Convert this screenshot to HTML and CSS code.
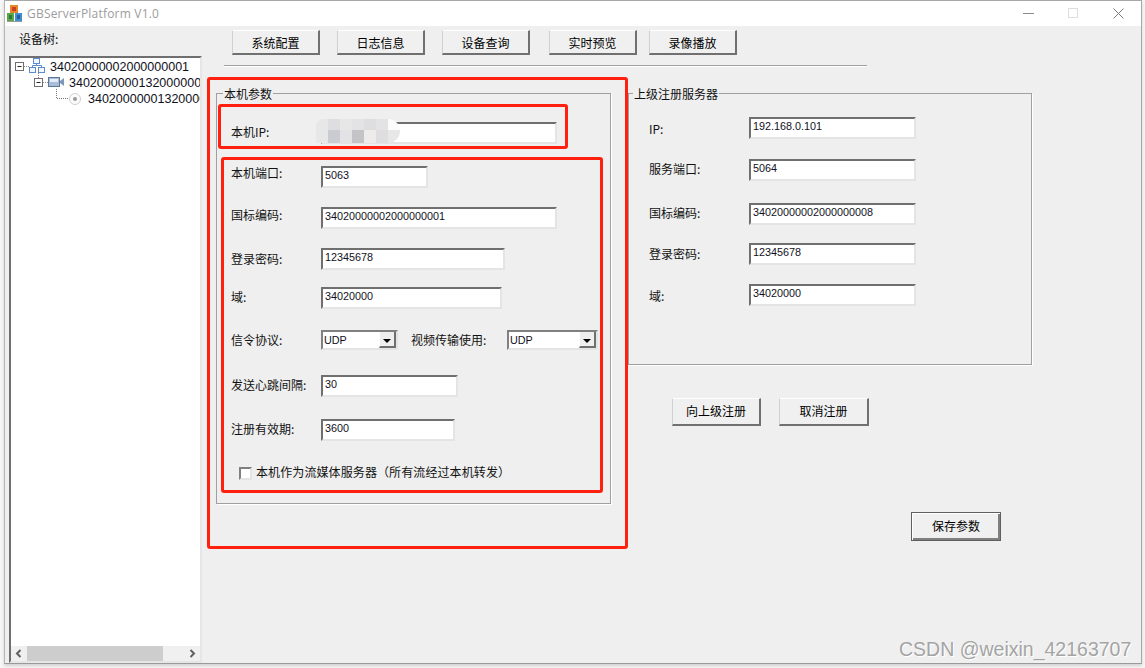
FILE: index.html
```html
<!DOCTYPE html>
<html lang="zh-CN">
<head>
<meta charset="utf-8">
<title>GBServerPlatform V1.0</title>
<link rel="stylesheet" href="styles.css">
</head>
<body>
<div class="window">
  <header class="titlebar">
    <svg class="app-icon" width="15" height="17" viewBox="0 0 15 17">
      <rect x="3" y="0" width="8" height="8" fill="#e8862a"/>
      <rect x="5" y="2" width="4" height="4" fill="#c8402a"/>
      <rect x="0" y="8" width="7" height="8" fill="#5aa648"/>
      <rect x="2" y="10" width="3" height="4" fill="#2f7a34"/>
      <rect x="8" y="8" width="7" height="8" fill="#3f8fd0"/>
      <rect x="10" y="10" width="3" height="4" fill="#1f5fa8"/>
      <rect x="0" y="16" width="15" height="1" fill="#999"/>
    </svg>
    <span class="app-title">GBServerPlatform V1.0</span>
    <div class="win-controls">
      <svg width="11" height="11" viewBox="0 0 11 11"><path d="M0 5.5H11" stroke="#8a8a8a" fill="none"/></svg>
      <svg width="11" height="11" viewBox="0 0 11 11"><rect x=".5" y=".5" width="9" height="9" stroke="#dedede" fill="none"/></svg>
      <svg width="11" height="11" viewBox="0 0 11 11"><path d="M.5 .5L10.5 10.5M10.5 .5L.5 10.5" stroke="#7a7a7a" fill="none"/></svg>
    </div>
  </header>

  <div class="content">
    <aside class="sidebar">
      <div class="sidebar-label">设备树:</div>
      <div class="tree-box">
        <div class="tree">
          <div class="tree-row level-1">
            <svg class="tree-glyph" width="30" height="16" viewBox="0 0 30 16">
              <rect x=".5" y="3.5" width="8" height="8" fill="#fff" stroke="#6f6f6f"/>
              <path d="M2.5 7.5H6.5" stroke="#222"/>
              <path d="M9 7.5H14" stroke="#888" stroke-dasharray="1 1"/>
              <g fill="#f2f6fd" stroke="#5b8bd0">
                <rect x="18.5" y="-.5" width="6" height="5"/>
                <rect x="14.5" y="8.5" width="6" height="5"/>
                <rect x="23.5" y="8.5" width="6" height="5"/>
              </g>
              <path d="M21.5 4.5V6.5M17.5 8.5V6.5H26.5V8.5" fill="none" stroke="#5b8bd0"/>
            </svg>
            <span class="tree-text">34020000002000000001</span>
          </div>
          <div class="tree-row level-2">
            <svg class="tree-glyph" width="30" height="16" viewBox="0 0 30 16">
              <path d="M4.5 -6V3" stroke="#888" stroke-dasharray="1 1"/>
              <rect x=".5" y="3.5" width="8" height="8" fill="#fff" stroke="#6f6f6f"/>
              <path d="M2.5 7.5H6.5" stroke="#222"/>
              <path d="M9 7.5H14" stroke="#888" stroke-dasharray="1 1"/>
              <rect x="14.5" y="2.5" width="11" height="9" fill="#a9bdd8" stroke="#5d7696"/>
              <rect x="16" y="4" width="8" height="3" fill="#e4ecf6"/>
              <path d="M26 6L30 3V11L26 8Z" fill="#7f97b8"/>
            </svg>
            <span class="tree-text">34020000001320000000</span>
          </div>
          <div class="tree-row level-3">
            <svg class="tree-glyph" width="30" height="16" viewBox="0 0 30 16">
              <path d="M3.5 -2V7.5H15" fill="none" stroke="#777" stroke-dasharray="1 1"/>
              <circle cx="22" cy="8" r="5.5" fill="#fbfbfb" stroke="#cfcfcf"/>
              <circle cx="22" cy="8" r="2" fill="#9a9a9a"/>
            </svg>
            <span class="tree-text">34020000001320000001</span>
          </div>
        </div>
        <div class="hscroll">
          <svg class="scroll-arrow" width="16" height="15" viewBox="0 0 16 15"><path d="M9.5 4L6 7.5L9.5 11" fill="none" stroke="#606060" stroke-width="2"/></svg>
          <div class="scroll-thumb"></div>
          <svg class="scroll-arrow end" width="16" height="15" viewBox="0 0 16 15"><path d="M6.5 4L10 7.5L6.5 11" fill="none" stroke="#606060" stroke-width="2"/></svg>
        </div>
      </div>
    </aside>

    <main class="main">
      <nav class="toolbar">
        <button class="btn">系统配置</button>
        <button class="btn">日志信息</button>
        <button class="btn">设备查询</button>
        <button class="btn">实时预览</button>
        <button class="btn">录像播放</button>
      </nav>
      <div class="separator"></div>

      <div class="panels">
        <section class="group group-local">
          <span class="legend">本机参数</span>
          <div class="row">
            <label class="label label-local lift-4">本机IP:</label>
            <input class="field w-236" value="">
            <div class="mosaic">
              <i class="c1"></i><i class="c2"></i><i class="c1"></i><i class="c3"></i><i class="c2"></i><i class="c3"></i><i class="c0"></i>
              <i class="c1"></i><i class="c4"></i><i class="c3"></i><i class="c5"></i><i class="c6"></i><i class="c2"></i><i class="c1"></i>
            </div>
          </div>
          <div class="row">
            <label class="label label-local lift-8">本机端口:</label>
            <input class="field w-107" value="5063">
          </div>
          <div class="row">
            <label class="label label-local lift-6">国标编码:</label>
            <input class="field w-236" value="34020000002000000001">
          </div>
          <div class="row">
            <label class="label label-local lift-2">登录密码:</label>
            <input class="field w-184" value="12345678">
          </div>
          <div class="row">
            <label class="label label-local lift-4">域:</label>
            <input class="field w-181" value="34020000">
          </div>
          <div class="row">
            <label class="label label-local lift-2">信令协议:</label>
            <div class="combo w-77"><span class="combo-text">UDP</span><span class="combo-btn"></span></div>
            <label class="label label-video lift-2">视频传输使用:</label>
            <div class="combo w-91"><span class="combo-text">UDP</span><span class="combo-btn"></span></div>
          </div>
          <div class="row">
            <label class="label label-local lift-4">发送心跳间隔:</label>
            <input class="field w-137" value="30">
          </div>
          <div class="row">
            <label class="label label-local lift-4">注册有效期:</label>
            <input class="field w-134" value="3600">
          </div>
          <div class="check-row">
            <span class="checkbox"></span>
            <span class="check-text">本机作为流媒体服务器（所有流经过本机转发）</span>
          </div>
        </section>

        <div class="right-col">
          <section class="group group-upper">
            <span class="legend">上级注册服务器</span>
            <div class="row">
              <label class="label label-upper">IP:</label>
              <input class="field w-167" value="192.168.0.101">
            </div>
            <div class="row">
              <label class="label label-upper lift-4">服务端口:</label>
              <input class="field w-167" value="5064">
            </div>
            <div class="row">
              <label class="label label-upper lift-4">国标编码:</label>
              <input class="field w-167" value="34020000002000000008">
            </div>
            <div class="row">
              <label class="label label-upper lift-2">登录密码:</label>
              <input class="field w-167" value="12345678">
            </div>
            <div class="row">
              <label class="label label-upper">域:</label>
              <input class="field w-167" value="34020000">
            </div>
          </section>
          <div class="register-actions">
            <button class="btn btn-tall">向上级注册</button>
            <button class="btn btn-tall btn-wide">取消注册</button>
          </div>
          <div class="save-row">
            <button class="btn btn-default">保存参数</button>
          </div>
        </div>
      </div>

      <div class="mark mark-outer"></div>
      <div class="mark mark-ip"></div>
      <div class="mark mark-fields"></div>
    </main>
  </div>
  <div class="watermark">CSDN @weixin_42163707</div>
</div>
</body>
</html>
```

FILE: styles.css
```css
* { box-sizing: border-box; }

html, body {
  margin: 0;
  height: 100%;
  overflow: hidden;
  background: #f6f6f6;
}

body {
  font-family: "Liberation Sans", "Noto Sans CJK SC", sans-serif;
  font-size: 12px;
  color: #111;
}

.window {
  position: relative;
  width: 1138px;
  height: 664px;
  margin-left: 4px;
  display: flex;
  flex-direction: column;
  background: #efefef;
  border-top: 1px solid #a8a8a8;
  border-left: 1px solid #b5b5b5;
  border-right: 1px solid #a8a8a8;
  border-bottom: 1px solid #9a9a9a;
  box-shadow: 0 2px 3px rgba(0, 0, 0, .15);
}

.titlebar {
  flex: none;
  height: 25px;
  display: flex;
  align-items: center;
  padding-left: 2px;
  background: #fff;
}

.app-icon { flex: none; }

.app-title {
  margin-left: 5px;
  padding-bottom: 1px;
  font-family: "Open Sans", sans-serif;
  font-size: 12px;
  letter-spacing: .2px;
  color: #9c9c9c;
}

.win-controls {
  margin-left: auto;
  margin-right: 17px;
  display: flex;
  gap: 34px;
}

.content {
  flex: 1;
  min-height: 0;
  display: flex;
}

.sidebar {
  flex: none;
  width: 197px;
  padding-left: 4px;
  display: flex;
  flex-direction: column;
}

.sidebar-label {
  flex: none;
  height: 30px;
  padding: 4px 0 0 10px;
  font-family: "Noto Sans CJK SC", sans-serif;
  line-height: 17px;
}

.tree-box {
  flex: 1;
  min-height: 0;
  display: flex;
  flex-direction: column;
  background: #fff;
  border: 2px solid;
  border-color: #6f6f6f #e6e6e6 #e6e6e6 #6f6f6f;
}

.tree {
  flex: 1;
  min-height: 0;
  padding-top: 1px;
  overflow: hidden;
}

.tree-row {
  height: 16px;
  display: flex;
  align-items: center;
  white-space: nowrap;
}

.level-1 { padding-left: 4px; }
.level-2 { padding-left: 23px; }
.level-3 { padding-left: 42px; }

.tree-glyph {
  flex: none;
  overflow: visible;
}

.tree-text {
  margin-left: 5px;
  font-size: 12.5px;
  color: #10101c;
}

.hscroll {
  flex: none;
  height: 15px;
  display: flex;
  background: #f0f0f0;
}

.scroll-arrow { flex: none; }
.scroll-arrow.end { margin-left: auto; }

.scroll-thumb {
  width: 136px;
  background: #cdcdcd;
}

.main {
  position: relative;
  flex: 1;
  min-width: 0;
}

.toolbar {
  display: grid;
  grid-template-columns: 105px 105px 107px 100px 88px;
  padding: 4px 0 0 30px;
}

.btn {
  width: 88px;
  height: 25px;
  padding: 0;
  font-family: "Noto Sans CJK SC", sans-serif;
  font-size: 12px;
  color: #000;
  background: #f0f0f0;
  border-style: solid;
  border-width: 1px 2px 2px 1px;
  border-color: #fff #707070 #707070 #d0d0d0;
}

.separator {
  width: 643px;
  height: 2px;
  margin: 10px 0 0 22px;
  border-top: 1px solid #a0a0a0;
  border-bottom: 1px solid #fff;
}

.panels {
  margin: 26px 0 0 14px;
  display: flex;
  align-items: flex-start;
  gap: 17px;
}

.group {
  position: relative;
  display: grid;
  align-items: start;
  border: 1px solid #a0a0a0;
  box-shadow: 1px 1px 0 #fff;
}

.group-local {
  flex: none;
  width: 395px;
  height: 411px;
  padding: 28px 0 0 14px;
  grid-template-rows: 42px 42px 42px 39px 43px 45px 44px 46px 1fr;
}

.group-upper {
  width: 404px;
  height: 272px;
  padding: 23px 0 0 20px;
  grid-template-rows: 42px 44px 40px 41px 1fr;
}

.legend {
  position: absolute;
  top: -9px;
  left: 6px;
  padding: 0 1px;
  font-family: "Noto Sans CJK SC", sans-serif;
  font-size: 12px;
  line-height: 17px;
  background: #efefef;
}

.group-upper .legend { left: 4px; }

.row {
  position: relative;
  display: flex;
  align-items: center;
}

.label {
  flex: none;
  font-family: "Noto Sans CJK SC", sans-serif;
  font-size: 12px;
  line-height: 17px;
  white-space: nowrap;
}

.label-local { width: 90px; }
.label-upper { width: 100px; }
.label-video { width: 96px; margin-left: 13px; }

.lift-2 { padding-bottom: 2px; }
.lift-4 { padding-bottom: 4px; }
.lift-6 { padding-bottom: 6px; }
.lift-8 { padding-bottom: 8px; }

.field {
  flex: none;
  height: 22px;
  padding: 0 0 4px 2px;
  font-family: "Liberation Sans", sans-serif;
  font-size: 10.8px;
  color: #10101c;
  background: #fff;
  border: 2px solid;
  border-color: #6f6f6f #e4e4e4 #e4e4e4 #6f6f6f;
  border-radius: 0;
  outline: none;
}

.w-107 { width: 107px; }
.w-134 { width: 134px; }
.w-137 { width: 137px; }
.w-167 { width: 167px; }
.w-181 { width: 181px; }
.w-184 { width: 184px; }
.w-236 { width: 236px; }
.w-77 { width: 77px; }
.w-91 { width: 91px; }

.combo {
  flex: none;
  height: 20px;
  display: flex;
  background: #fff;
  border: 2px solid;
  border-color: #808080 #e4e4e4 #e4e4e4 #808080;
}

.combo-text {
  flex: 1;
  font-size: 10.8px;
  line-height: 16px;
  padding-left: 1px;
  color: #10101c;
}

.combo-btn {
  position: relative;
  flex: none;
  width: 17px;
  background: #efefef;
  border-left: 1px solid #fff;
  border-right: 2px solid #707070;
  border-bottom: 2px solid #707070;
}

.combo-btn::after {
  content: "";
  position: absolute;
  left: 3px;
  top: 7px;
  border: 4px solid transparent;
  border-top: 4px solid #000;
  border-bottom: 0;
}

.mosaic {
  position: absolute;
  left: 85px;
  top: -3px;
  width: 84px;
  height: 24px;
  display: grid;
  grid-template-columns: repeat(7, 12px);
  grid-template-rows: 11px 13px;
  border-radius: 8px 12px 12px 2px;
  overflow: hidden;
}

.c0 { background: #fbfbfb; }
.c1 { background: #e7e7e8; }
.c2 { background: #dedee1; }
.c3 { background: #e3e3e5; }
.c4 { background: #cbcbd2; }
.c5 { background: #c4c4c6; }
.c6 { background: #edeceb; }

.check-row {
  display: flex;
  align-items: center;
  padding: 0 0 0 8px;
}

.checkbox {
  flex: none;
  width: 13px;
  height: 13px;
  background: #fff;
  border: 2px solid;
  border-color: #808080 #e4e4e4 #e4e4e4 #808080;
}

.check-text {
  margin-left: 4px;
  padding-bottom: 3px;
  font-family: "Noto Sans CJK SC", sans-serif;
  line-height: 13px;
  letter-spacing: .1px;
  white-space: nowrap;
}

.right-col {
  flex: none;
  width: 404px;
}

.register-actions {
  display: flex;
  gap: 18px;
  margin: 33px 0 0 44px;
}

.btn-tall { height: 28px; width: 89px; padding-bottom: 2px; }
.btn-wide { width: 90px; }

.save-row {
  margin: 86px 0 0 283px;
}

.btn-default {
  width: 90px;
  height: 29px;
  padding-bottom: 2px;
  border: 1px solid #5f5f5f;
  box-shadow: inset 1px 1px 0 #fff, inset -2px -2px 0 #808080;
}

.mark {
  position: absolute;
  border: 3px solid #ff2010;
  border-radius: 3px;
  pointer-events: none;
}

.mark-outer { left: 5px; top: 51px; width: 421px; height: 472px; }
.mark-ip { left: 16px; top: 78px; width: 350px; height: 45px; }
.mark-fields { left: 19px; top: 131px; width: 382px; height: 336px; }

.watermark {
  position: absolute;
  left: 894px;
  top: 637px;
  font-family: "Liberation Sans", sans-serif;
  font-size: 19.5px;
  line-height: 22px;
  color: #a4a4a4;
  text-shadow: 1px 1px 0 #fff;
  white-space: nowrap;
}
```
